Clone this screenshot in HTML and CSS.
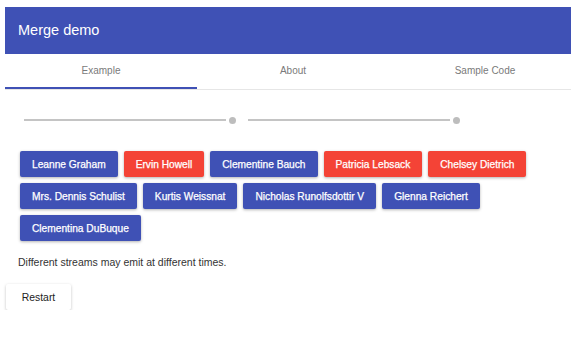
FILE: index.html
```html
<!DOCTYPE html>
<html>
<head>
  <meta charset="UTF-8" />
  <title>Merge demo</title>
  <link rel="stylesheet" href="styles.css">
</head>
<body>
  <div class="app">
    <div class="toolbar">Merge demo</div>

    <div class="tabs">
      <div class="tab active">Example</div>
      <div class="tab">About</div>
      <div class="tab">Sample Code</div>
    </div>

    <div class="sliders">
      <div class="slider"><div class="track"></div><div class="thumb"></div></div>
      <div class="slider"><div class="track"></div><div class="thumb"></div></div>
    </div>

    <div class="people">
      <button class="chip">Leanne Graham</button>
      <button class="chip warn">Ervin Howell</button>
      <button class="chip">Clementine Bauch</button>
      <button class="chip warn">Patricia Lebsack</button>
      <button class="chip warn">Chelsey Dietrich</button>
      <button class="chip">Mrs. Dennis Schulist</button>
      <button class="chip">Kurtis Weissnat</button>
      <button class="chip">Nicholas Runolfsdottir V</button>
      <button class="chip">Glenna Reichert</button>
      <button class="chip">Clementina DuBuque</button>
    </div>

    <p class="note">Different streams may emit at different times.</p>

    <button class="restart">Restart</button>
  </div>
</body>
</html>
```

FILE: styles.css
```css
html, body {
  overflow: hidden;
}
body {
  margin: 0;
  background: #fff;
  font-family: "Liberation Sans", Arial, sans-serif;
  color: #333;
}
.app {
  margin: 7px 0 0 5px;
  width: 576px;
}
.toolbar {
  background: #3f51b5;
  color: #fff;
  font-size: 14.5px;
  height: 47px;
  line-height: 47px;
  padding-left: 13px;
}
.tabs {
  display: flex;
  height: 35px;
  border-bottom: 1px solid #e6e6e6;
}
.tab {
  flex: 1;
  text-align: center;
  font-size: 10px;
  color: #7a7a7a;
  line-height: 33px;
  border-bottom: 2px solid transparent;
}
.tab.active {
  border-bottom-color: #3f51b5;
}
.sliders {
  display: flex;
  gap: 12px;
  padding: 25px 0 0 19px;
  height: 10px;
}
.slider {
  width: 212px;
  display: flex;
  align-items: center;
  gap: 3px;
}
.track {
  flex: 1;
  height: 2px;
  background: #c4c4c4;
}
.thumb {
  width: 7px;
  height: 7px;
  border-radius: 50%;
  background: #bdbdbd;
}
.people {
  display: flex;
  flex-wrap: wrap;
  gap: 6px 6px;
  width: 520px;
  padding: 26px 0 0 15px;
}
.chip {
  font-family: "Liberation Sans", Arial, sans-serif;
  font-size: 10.2px;
  color: #fff;
  -webkit-text-stroke: 0.25px #fff;
  background: #3f51b5;
  border: 0;
  border-radius: 2px;
  height: 26px;
  padding: 0 12px;
  box-shadow: 0 1px 3px rgba(0,0,0,0.3);
}
.chip.warn {
  background: #f44336;
}
.note {
  font-size: 10.5px;
  margin: 15px 0 0 13px;
}
.restart {
  font-family: "Liberation Sans", Arial, sans-serif;
  font-size: 10.4px;
  color: #222;
  background: #fff;
  border: 0;
  border-radius: 2px;
  height: 26px;
  width: 65px;
  margin: 16px 0 0 1px;
  box-shadow: 0 1px 3px rgba(0,0,0,0.25);
}
```
